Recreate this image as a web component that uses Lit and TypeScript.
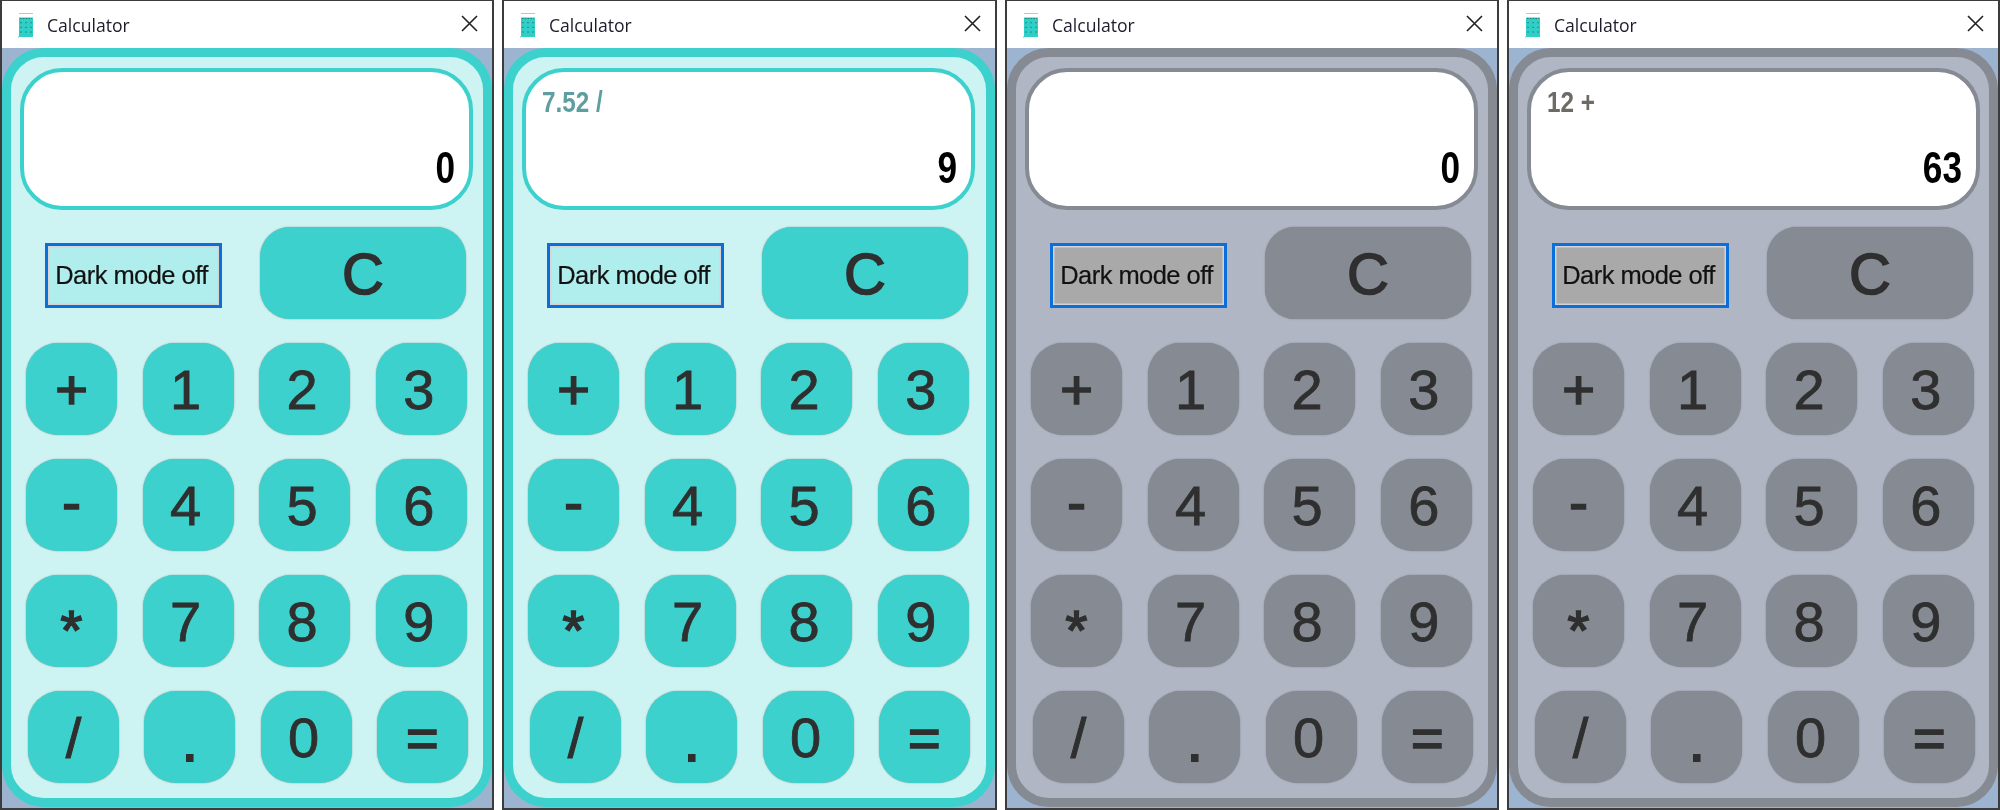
import { LitElement, html, css, svg } from "lit";
import { customElement, property } from "lit/decorators.js";

const ROWS: string[][] = [
  ["+", "1", "2", "3"],
  ["-", "4", "5", "6"],
  ["*", "7", "8", "9"],
  ["/", ".", "0", "="],
];

const OP_CLASS: Record<string, string> = {
  "+": "op",
  "-": "op minus",
  "*": "op star",
  "/": "op slash",
  ".": "op dot",
  "=": "op",
};

const appIcon = svg`
  <path d="M1 1.5H15" stroke="#7fe0dc" stroke-width="1" fill="none" />
  <rect x="1" y="5.5" width="14" height="19.5" fill="#2fcfc8" />
  <path d="M2 6.5H14" stroke="#1f7f7c" stroke-width="1.2" stroke-dasharray="1.6 1.2" />
  <path d="M3 10v13M8 10v13M13 10v13" stroke="#17524f" stroke-width="1" stroke-dasharray="1.3 3.4" opacity="0.8" />
  <path d="M0.5 25.5L2 23" stroke="#2fcfc8" stroke-width="1" />
`;

@customElement("calc-window")
class CalcWindow extends LitElement {
  @property({ type: String }) prev = "";
  @property({ type: String }) value = "0";
  @property({ type: Boolean, reflect: true }) dark = false;

  static styles = css`
    :host {
      display: block;
      --accent: #3dd1cd;
      --panel: #cdf4f2;
      --toggle: #b0eeee;
      --prev: #5f9ea0;
      height: 810px;
    }
    :host([dark]) {
      --accent: #858a93;
      --panel: #b0b6c4;
      --toggle: #a9a9a9;
      --prev: #6e6a66;
    }
    .win {
      box-sizing: border-box;
      height: 810px;
      border: 2px solid #3c3c3c;
      border-top-width: 1px;
      display: flex;
      flex-direction: column;
      background: #9db4d0;
      font-family: "Liberation Sans", Arial, sans-serif;
      filter: blur(0.35px);
    }
    .bar {
      height: 47px;
      flex: none;
      background: #fff;
      display: flex;
      align-items: center;
      padding: 0 14px 0 16px;
      gap: 13px;
    }
    .app-icon { width: 16px; height: 26px; flex: none; margin-top: 1px; }
    .title {
      font-family: "Open Sans", "Noto Sans", sans-serif;
      font-size: 17.6px;
      color: #1c1c2c;
      flex: 1;
    }
    .close { width: 17px; height: 17px; flex: none; margin-top: -2px; }
    .card {
      flex: 1;
      box-sizing: border-box;
      margin-bottom: 1px;
      border: 9px solid var(--accent);
      border-radius: 42px;
      background: var(--panel);
      padding: 11px 10px 0 9px;
      display: flex;
      flex-direction: column;
    }
    .display {
      box-sizing: border-box;
      width: 453px;
      height: 142px;
      flex: none;
      border: 4px solid var(--accent);
      border-radius: 42px;
      background: #fff;
      padding: 14px 14px 17px 16px;
      display: flex;
      flex-direction: column;
      justify-content: space-between;
    }
    .prev {
      height: 32px;
      line-height: 32px;
      font-size: 30px;
      font-weight: 700;
      color: var(--prev);
      transform: scaleX(0.81);
      transform-origin: left center;
      white-space: pre;
    }
    .cur {
      height: 42px;
      line-height: 42px;
      font-size: 44px;
      font-weight: 700;
      color: #000;
      text-align: right;
      transform: scaleX(0.8);
      transform-origin: right center;
    }
    .controls {
      display: flex;
      align-items: center;
      margin-top: 17px;
      padding-left: 25px;
    }
    .toggle {
      box-sizing: border-box;
      width: 177px;
      height: 65px;
      margin-top: 5px;
      padding: 0 4px 0 0;
      border: 3px solid #0a6edb;
      box-shadow: inset 0 0 0 1.5px #d4d4d4;
      background: var(--toggle);
      color: #111;
      font: 25.5px "Liberation Sans", Arial, sans-serif;
      letter-spacing: -0.55px;
      -webkit-text-stroke: 0.2px #111;
    }
    button.clear {
      width: 206px;
      height: 92px;
      margin-left: 38px;
      font-size: 58px;
      border-radius: 30px;
      -webkit-text-stroke: 1.6px #2f2f2f;
    }
    .keys {
      display: flex;
      flex-direction: column;
      gap: 24px;
      margin-top: 24px;
      padding-left: 6px;
    }
    .row { display: flex; gap: 25.6px; }
    .row.last { padding-left: 2px; gap: 25.3px; }
    button.key {
      box-sizing: border-box;
      border: 0;
      background: var(--accent);
      color: #2f2f2f;
      font-family: "Liberation Sans", Arial, sans-serif;
      box-shadow: 0 0 1.5px rgba(70, 70, 70, 0.55);
      display: flex;
      align-items: center;
      justify-content: center;
    }
    .digit, .op {
      width: 91px;
      height: 92px;
      border-radius: 32px;
      font-size: 56px;
      padding: 0;
    }
    .digit { -webkit-text-stroke: 0.8px #2f2f2f; }
    .op { -webkit-text-stroke: 1.7px #2f2f2f; }
    button.digit { padding-right: 5px; }
    button.minus { padding-bottom: 6px; }
    button.star { padding-top: 16px; }
    button.slash { -webkit-text-stroke: 1px #2f2f2f; }
    button.dot { padding-top: 8px; -webkit-text-stroke: 2.2px #2f2f2f; }
  `;

  render() {
    return html`
      <div class="win">
        <div class="bar">
          <svg class="app-icon" viewBox="0 0 16 26">${appIcon}</svg>
          <span class="title">Calculator</span>
          <svg class="close" viewBox="0 0 17 17">
            <path d="M1 1L16 16M16 1L1 16" stroke="#222" stroke-width="1.6" fill="none" />
          </svg>
        </div>
        <div class="card">
          <div class="display">
            <div class="prev">${this.prev}</div>
            <div class="cur">${this.value}</div>
          </div>
          <div class="controls">
            <button class="toggle">Dark mode off</button>
            <button class="key clear">C</button>
          </div>
          <div class="keys">
            ${ROWS.map(
              (row, i) => html`
                <div class="row ${i === ROWS.length - 1 ? "last" : ""}">
                  ${row.map((k) => html`<button class="key ${OP_CLASS[k] ?? "digit"}">${k}</button>`)}
                </div>
              `
            )}
          </div>
        </div>
      </div>
    `;
  }
}

@customElement("app-root")
export class AppRoot extends LitElement {
  static styles = css`
    :host {
      display: grid;
      grid-template-columns: 494px 495px 494px 493px;
      column-gap: 8px;
      width: 2000px;
      height: 810px;
      background: #fff;
      overflow: hidden;
    }
  `;

  render() {
    return html`
      <calc-window></calc-window>
      <calc-window prev="7.52 /" value="9"></calc-window>
      <calc-window dark></calc-window>
      <calc-window dark prev="12 +" value="63"></calc-window>
    `;
  }
}
